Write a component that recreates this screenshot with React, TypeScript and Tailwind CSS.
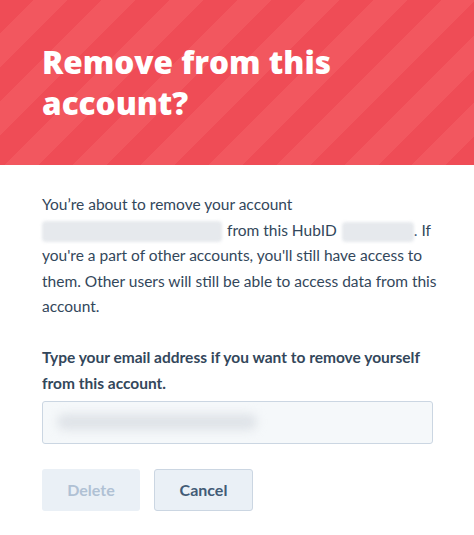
const Blur = ({ className }: { className: string }) => (
  <span className={`inline-block align-middle rounded-sm bg-[#e6e9ed] blur-[1.5px] ${className}`} />
);

export default function App() {
  return (
    <div className="w-[474px] h-[535px] bg-white font-['Lato',sans-serif] text-[#33475b]">
      <div className="h-[165px] bg-[repeating-linear-gradient(135deg,#ef4c56_0px,#ef4c56_24px,#f2575f_24px,#f2575f_48px)] px-[42px] pt-[41px]">
        <h1 className="font-['Open_Sans',sans-serif] text-[31.5px] leading-[41px] font-extrabold text-white">
          Remove from this
          <br />
          account?
        </h1>
      </div>
      <div className="pl-[42px] pr-[30px] pt-[27px]">
        <p className="text-[15.5px] leading-[25.5px]">
          You’re about to remove your account
          <br />
          <Blur className="w-[180px] h-[21px] mr-[5px]" />
          from this HubID <Blur className="w-[72px] h-[20px] ml-[1px]" />. If
          <br />
          you're a part of other accounts, you'll still have access to
          <br />
          them. Other users will still be able to access data from this
          <br />
          account.
        </p>
        <p className="mt-[24px] text-[15.5px] leading-[26px] font-bold">
          Type your email address if you want to remove yourself
          <br />
          from this account.
        </p>
        <div className="mt-[5px] h-[43px] w-[391px] rounded-[3px] border border-[#cbd6e2] bg-[#f5f8fa] flex items-center pl-[14px]">
          <span className="h-[16px] w-[200px] rounded-full bg-[#dfe3e8] blur-[5px]" />
        </div>
        <div className="mt-[25px] flex gap-[14px]">
          <button className="h-[42px] w-[98px] rounded-[3px] bg-[#eaf0f6] text-[#b0c1d4] text-[16px] font-bold">
            Delete
          </button>
          <button className="h-[42px] w-[99px] rounded-[3px] border border-[#cbd6e2] bg-[#eaf0f6] text-[#425b76] text-[16px] font-bold">
            Cancel
          </button>
        </div>
      </div>
    </div>
  );
}
